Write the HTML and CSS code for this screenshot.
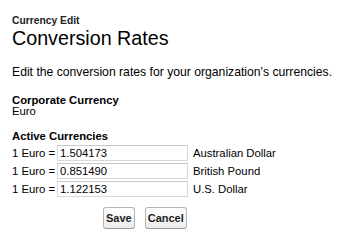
FILE: index.html
```html
<!DOCTYPE html>
<html lang="en">
<head>
    <meta charset="UTF-8">
    <title>Conversion Rates</title>
    <link rel="stylesheet" href="styles.css">
</head>
<body>
    <div class="page">
        <div class="page-header">
            <div class="page-type">Currency Edit</div>
            <h1 class="page-title">Conversion Rates</h1>
        </div>

        <p class="intro">Edit the conversion rates for your organization's currencies.</p>

        <div class="section">
            <div class="section-label">Corporate Currency</div>
            <div class="section-value">Euro</div>
        </div>

        <div class="section">
            <div class="section-label">Active Currencies</div>
            <div class="rate-row">
                <span class="rate-prefix">1 Euro =</span>
                <input class="rate-input" type="text" value="1.504173">
                <span class="rate-name">Australian Dollar</span>
            </div>
            <div class="rate-row">
                <span class="rate-prefix">1 Euro =</span>
                <input class="rate-input" type="text" value="0.851490">
                <span class="rate-name">British Pound</span>
            </div>
            <div class="rate-row">
                <span class="rate-prefix">1 Euro =</span>
                <input class="rate-input" type="text" value="1.122153">
                <span class="rate-name">U.S. Dollar</span>
            </div>
        </div>

        <div class="button-bar">
            <button class="btn" type="button">Save</button>
            <button class="btn" type="button">Cancel</button>
        </div>
    </div>
</body>
</html>
```

FILE: styles.css
```css
* { margin: 0; padding: 0; box-sizing: border-box; }
body {
    font-family: "Liberation Sans", Arial, sans-serif;
    background: #fff;
    color: #000;
}
.page { padding: 15px 12px 0 12px; }
.page-type { font-size: 10.3px; font-weight: bold; color: #222; line-height: 11px; }
.page-title { font-size: 19.7px; font-weight: normal; line-height: 22px; margin-top: 1px; }
.intro { font-size: 12.2px; line-height: 15px; margin-top: 16px; }
.section { margin-top: 15px; font-size: 11.3px; line-height: 11px; }
.section + .section { margin-top: 14px; }
.section-label { font-weight: bold; }
.rate-row { display: flex; align-items: center; height: 18px; }
.section-label + .rate-row { margin-top: 2px; }
.rate-prefix { width: 45px; }
.rate-input {
    width: 131px; height: 16px;
    border: 1px solid #d9d9d9; border-top-color: #c8c8c8;
    padding: 0 2px;
    font: 11.3px "Liberation Sans", Arial, sans-serif;
    color: #000;
    outline: none;
}
.rate-name { margin-left: 5px; }
.button-bar { display: flex; gap: 10px; padding-left: 91px; margin-top: 9px; }
.btn {
    height: 22px; padding: 0 2px;
    font: bold 11px "Liberation Sans", Arial, sans-serif;
    color: #222;
    background: linear-gradient(#ffffff, #ececec);
    border: 1px solid #b5b5b5; border-bottom-color: #999;
    border-radius: 3px;
}
```
